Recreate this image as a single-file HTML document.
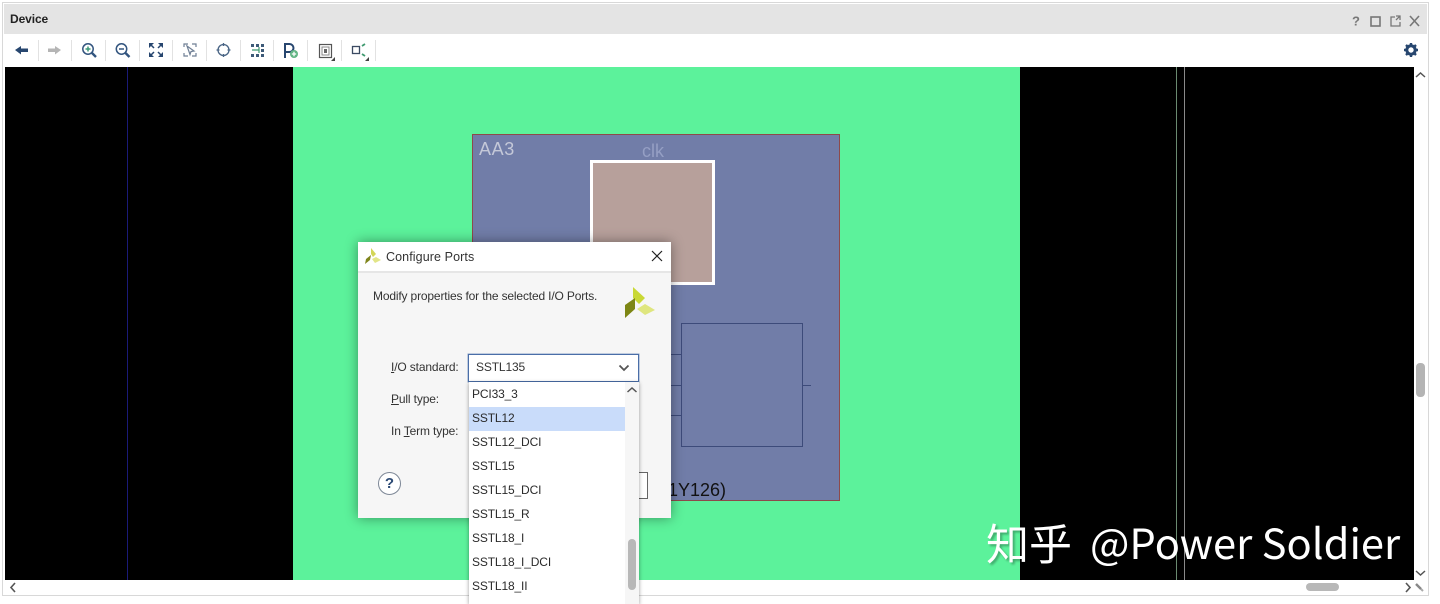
<!DOCTYPE html>
<html><head><meta charset="utf-8">
<style>
html,body{margin:0;padding:0;background:#fff;}
body{width:1440px;height:604px;overflow:hidden;position:relative;font-family:"Liberation Sans",sans-serif;}
.a{position:absolute;}
.t{position:absolute;white-space:nowrap;font-size:12px;line-height:14px;color:#333;}
.d{letter-spacing:-.14px;}
.sep{position:absolute;top:40px;width:1px;height:21px;background:#e2e2e2;}
.it{position:absolute;left:472px;font-size:12px;line-height:14px;color:#2a2a2a;white-space:nowrap;letter-spacing:-.14px;}
u{text-decoration:underline;}
</style></head><body>
<!-- panel -->
<div class="a" style="left:3px;top:3px;width:1425px;height:592px;background:#fff;box-shadow:0 0 0 1px #d8d8d8;"></div>
<div class="a" style="left:4px;top:4px;width:1423px;height:30px;background:#e4e4e4;"></div>
<div class="t" style="left:10px;top:12px;font-weight:bold;color:#222;letter-spacing:-.1px;">Device</div>

<!-- window buttons -->
<svg class="a" style="left:1345px;top:10px" width="80" height="22" fill="none" stroke="#777" stroke-width="1.600">
<text x="7" y="15.500" font-family="Liberation Sans" font-size="13" font-weight="bold" fill="#777" stroke="none">?</text>
<rect x="26" y="7" width="9" height="9"/>
<path d="M50 7h-4v9h9v-4M51 6h4v4M55 6l-4 4" stroke-width="1.300"/>
<path d="M65 6l9 10M74 6l-9 10"/>
</svg>

<!-- toolbar -->
<svg class="a" style="left:0;top:36px" width="400" height="30" fill="none">
<path d="M15 14l6-4v2.500h7v3.500h-7v2.500z" fill="#27466f"/>
<path d="M61 14l-6-4v2.500h-7v3.500h7v2.500z" fill="#b5b5b5"/>
<g stroke="#33557f" stroke-width="1.500">
<circle cx="88" cy="13" r="5.200"/><path d="M92 17l4 4" stroke-width="2.400"/><path d="M85.500 13h5M88 10.500v5" stroke="#3c9a78"/>
<circle cx="121.500" cy="13" r="5.200"/><path d="M125.500 17l4 4" stroke-width="2.400"/><path d="M119 13h5"/>
</g>
<g fill="#27466f">
<path d="M149 7h5l-5 5zM163 7h-5l5 5zM149 21h5l-5-5zM163 21h-5l5-5z"/>
</g>
<g stroke="#27466f" stroke-width="1.500">
<path d="M151 9l3 3M161 9l-3 3M151 19l3-3M161 19l-3-3"/>
</g>
<g stroke="#6f7f95" stroke-width="1.200">
<path d="M184 11v-3h4M192 8h4v3M184 17v3h4M192 20h4v-3"/>
<path d="M187 10l7 5-3 .5-1 3z"/>
</g>
<g stroke="#4a6585" stroke-width="1.300">
<circle cx="223.500" cy="14" r="5.500"/><path d="M223.500 7v3M223.500 18v3M216.500 14h3M227.500 14h3"/>
</g>
<g fill="#3d5a78">
<rect x="251" y="8" width="3" height="3"/><rect x="256" y="8" width="3" height="3"/><rect x="261" y="8" width="3" height="3"/>
<rect x="261" y="13" width="3" height="3"/>
<rect x="251" y="18" width="3" height="3"/><rect x="256" y="18" width="3" height="3"/><rect x="261" y="18" width="3" height="3"/>
</g>
<path d="M252 14h7v3M259 11v3" stroke="#3f9a70" stroke-width="1.200"/>
<path d="M285 22V8h4.500a3.700 3.700 0 0 1 0 8H285" stroke="#27466f" stroke-width="2"/>
<circle cx="294" cy="18" r="4" fill="#62b584"/><path d="M291.800 18h4.400M294 15.800v4.400" stroke="#fff" stroke-width="1.300"/>
<g stroke="#555">
<rect x="319.500" y="8.500" width="12" height="13" stroke-width="1.200"/>
<rect x="322" y="11" width="7" height="8" stroke="#888"/>
<rect x="324" y="13" width="3" height="4" fill="#666" stroke="none"/>
</g>
<path d="M335 25v-4l-4 4z" fill="#444"/>
<rect x="352.500" y="10.500" width="7" height="7" stroke="#3b4a62" stroke-width="1.300"/>
<path d="M362 10l3-2M362 18l3 2" stroke="#3f9a70" stroke-width="1.800"/>
<path d="M369 25v-4l-4 4z" fill="#444"/>
</svg>
<div class="sep" style="left:38px"></div><div class="sep" style="left:71px"></div><div class="sep" style="left:105px"></div>
<div class="sep" style="left:139px"></div><div class="sep" style="left:172px"></div><div class="sep" style="left:206px"></div>
<div class="sep" style="left:240px"></div><div class="sep" style="left:273px"></div><div class="sep" style="left:307px"></div>
<div class="sep" style="left:341px"></div><div class="sep" style="left:375px"></div>
<!-- gear -->
<svg class="a" style="left:1403px;top:42px" width="16" height="16" viewBox="0 0 16 16">
<circle cx="8" cy="8" r="4.200" fill="none" stroke="#27466f" stroke-width="3"/>
<path d="M8 1v14M1 8h14M3 3l10 10M13 3L3 13" stroke="#27466f" stroke-width="2.400" stroke-dasharray="2.600 8.800 2.600 0"/>
</svg>

<!-- canvas -->
<div class="a" style="left:5px;top:67px;width:1409px;height:513px;background:#000;"></div>
<div class="a" style="left:127px;top:67px;width:1px;height:513px;background:#1a1a78;"></div>
<div class="a" style="left:293px;top:67px;width:727px;height:513px;background:#5cf29b;"></div>
<div class="a" style="left:1176px;top:67px;width:1px;height:513px;background:#6a8a70;"></div>
<div class="a" style="left:1184px;top:67px;width:1px;height:513px;background:#8a8a8a;"></div>

<!-- package pin -->
<div class="a" style="left:472px;top:134px;width:366px;height:365px;background:#717da8;border:1px solid #8e4a4a;"></div>
<div class="t" style="left:479px;top:139px;font-size:18px;line-height:20px;color:#c4c8d8;letter-spacing:.6px;">AA3</div>
<div class="t" style="left:642px;top:141px;font-size:18px;line-height:20px;color:#959fc4;">clk</div>
<div class="a" style="left:590px;top:160px;width:119px;height:119px;background:#b7a09b;border:3px solid #fff;"></div>
<div class="a" style="left:681px;top:323px;width:120px;height:122px;border:1px solid #3d4b7a;"></div>
<div class="a" style="left:660px;top:354px;width:21px;height:1px;background:#3d4b7a;"></div>
<div class="a" style="left:660px;top:385px;width:21px;height:1px;background:#3d4b7a;"></div>
<div class="a" style="left:660px;top:415px;width:21px;height:1px;background:#3d4b7a;"></div>
<div class="a" style="left:803px;top:385px;width:8px;height:1px;background:#3d4b7a;"></div>
<div class="t" style="left:668px;top:480px;font-size:18px;line-height:20px;color:#111;">1Y126)</div>

<!-- scrollbars -->
<svg class="a" style="left:1414px;top:67px" width="14" height="14" fill="none"><path d="M2 10l4.500-4 4.500 4" stroke="#555" stroke-width="1.500"/></svg>
<div class="a" style="left:1416px;top:363px;width:9px;height:34px;background:#b4b4b4;border-radius:4px;"></div>
<svg class="a" style="left:1414px;top:568px" width="14" height="12" fill="none"><path d="M2 3l4.500 4 4.500-4" stroke="#555" stroke-width="1.500"/></svg>
<svg class="a" style="left:6px;top:581px" width="14" height="13" fill="none"><path d="M9 2L5 6.500 9 11" stroke="#555" stroke-width="1.600"/></svg>
<div class="a" style="left:1306px;top:583px;width:33px;height:8px;background:#b8b8b8;border-radius:4px;"></div>
<svg class="a" style="left:1402px;top:581px" width="24" height="13" fill="none"><path d="M4 2l4 4.500L4 11" stroke="#555" stroke-width="1.600"/><path d="M14 3l5 5" stroke="#888" stroke-width="2.400"/><path d="M19 8l2 2" stroke="#aaa" stroke-width="2"/></svg>

<!-- dialog -->
<div class="a" style="left:358px;top:242px;width:313px;height:276px;background:#f6f6f6;box-shadow:0 0 12px rgba(0,0,0,.4);"></div>
<div class="a" style="left:358px;top:242px;width:313px;height:29px;background:#fff;border-bottom:2px solid #e6e6e6;"></div>
<svg class="a" style="left:365px;top:248px" width="16" height="16"><path d="M6 0l5 6-3 3-2-3z" fill="#d3d656"/><path d="M0 16l1-5 5-4-1 5z" fill="#7f851c"/><path d="M7 11l4-2 5 3-6 3z" fill="#e2e588"/></svg>
<div class="t" style="left:386px;top:250px;font-size:12.500px;letter-spacing:.1px;color:#333;">Configure Ports</div>
<svg class="a" style="left:650px;top:249px" width="14" height="14" fill="none"><path d="M2 2l10 10M12 2L2 12" stroke="#222" stroke-width="1.200"/></svg>
<div class="t d" style="left:373px;top:289px;letter-spacing:-.16px;">Modify properties for the selected I/O Ports.</div>
<svg class="a" style="left:624px;top:286px" width="34" height="34"><path d="M9 1l12 11-6 6-6-6z" fill="#c9d835"/><path d="M1 19l10-7v11L1 32z" fill="#7d8614"/><path d="M13 23l8-5 10 6-10 5z" fill="#dfe67f"/></svg>

<div class="t d" style="left:391px;top:360px;"><u>I</u>/O standard:</div>
<div class="t d" style="left:391px;top:392px;"><u>P</u>ull type:</div>
<div class="t d" style="left:391px;top:424px;">In <u>T</u>erm type:</div>

<div class="a" style="left:468px;top:354px;width:169px;height:26px;background:#fff;border:1px solid #4a6ea8;box-shadow:0 0 0 .5px #8aa3c8;"></div>
<div class="t d" style="left:476px;top:360px;color:#333;">SSTL135</div>
<svg class="a" style="left:617px;top:362px" width="14" height="12" fill="none"><path d="M2.500 3.500l4.500 4.500 4.500-4.500" stroke="#555" stroke-width="1.800"/></svg>

<div class="a" style="left:378px;top:472px;width:21px;height:21px;border:1.500px solid #7d8796;border-radius:50%;background:#fff;text-align:center;font-size:15px;line-height:22px;font-weight:bold;color:#2c4a75;box-sizing:content-box;">?</div>
<div class="a" style="left:636px;top:472px;width:10px;height:25px;background:#fff;border:1px solid #666;"></div>

<!-- dropdown -->
<div class="a" style="left:469px;top:382px;width:170px;height:222px;background:#fff;box-shadow:0 1px 4px rgba(0,0,0,.4);"></div>
<div class="a" style="left:625px;top:382px;width:14px;height:222px;background:#f6f6f6;"></div>
<div class="a" style="left:469px;top:407px;width:156px;height:24px;background:#c9dcfa;"></div>
<svg class="a" style="left:625px;top:384px" width="14" height="12" fill="none"><path d="M2.500 8l4.500-4 4.500 4" stroke="#555" stroke-width="1.500"/></svg>
<div class="a" style="left:628px;top:539px;width:8px;height:51px;background:#b8b8b8;border-radius:4px;"></div>
<div class="it" style="top:387px">PCI33_3</div>
<div class="it" style="top:411px">SSTL12</div>
<div class="it" style="top:435px">SSTL12_DCI</div>
<div class="it" style="top:459px">SSTL15</div>
<div class="it" style="top:483px">SSTL15_DCI</div>
<div class="it" style="top:507px">SSTL15_R</div>
<div class="it" style="top:531px">SSTL18_I</div>
<div class="it" style="top:555px">SSTL18_I_DCI</div>
<div class="it" style="top:579px">SSTL18_II</div>

<!-- watermark -->
<div class="t" style="left:986px;top:514px;font-family:'Noto Sans CJK SC','Noto Sans CJK JP',sans-serif;font-size:43px;line-height:56px;color:#fff;text-shadow:2px 2px 2px rgba(0,0,0,.3);">知乎</div>
<div class="t" style="left:1090px;top:514px;font-family:'Noto Sans CJK SC','Noto Sans CJK JP',sans-serif;font-size:41.700px;line-height:56px;color:#fff;">@Power Soldier</div>
</body></html>
